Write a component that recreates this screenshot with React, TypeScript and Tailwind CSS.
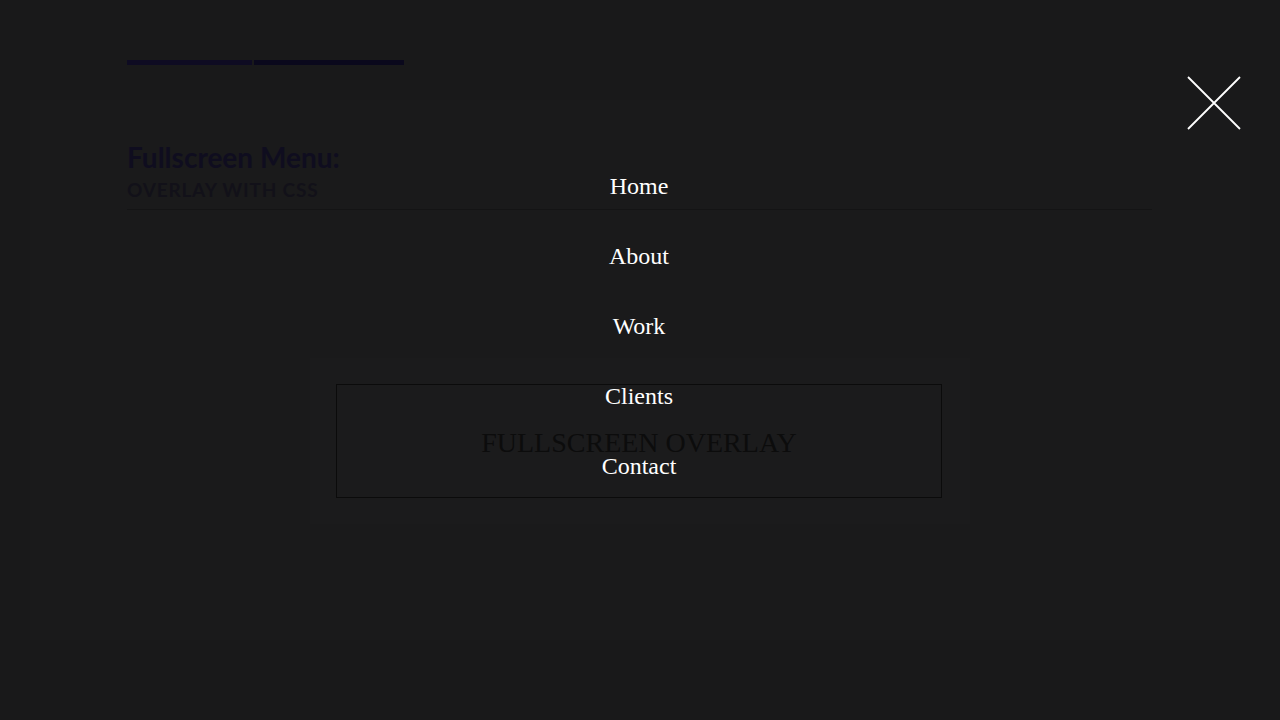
const menuItems = ["Home", "About", "Work", "Clients", "Contact"];

function CloseIcon() {
  return (
    <svg width="56" height="56" viewBox="0 0 56 56" fill="none">
      <path d="M2 2 L54 54 M54 2 L2 54" stroke="#ffffff" strokeWidth="1.8" />
    </svg>
  );
}

export default function App() {
  return (
    <div className="relative h-[720px] w-full overflow-hidden bg-[#19191a] font-['Lato',sans-serif]">
      {/* page underneath the overlay */}
      <div className="px-[127px] pt-[60px]">
        <div className="flex gap-[2px]">
          <div className="h-[5px] w-[125px] bg-[#0e0b22]" />
          <div className="h-[5px] w-[150px] bg-[#0a081c]" />
        </div>
      </div>
      <div className="mx-[30px] mt-[35px] h-[540px] bg-[#1a1a1b] px-[97px] pt-[41px]">
        <div className="w-[1025px] border-b border-[#141415] pb-[7px]">
          <h1 className="text-[28px] font-bold leading-[33px] text-[#0f0d1f]">Fullscreen Menu:</h1>
          <h2 className="mt-[4px] text-[19px] font-bold uppercase leading-[24px] tracking-[0.8px] text-[#121119]">
            Overlay with CSS
          </h2>
        </div>
        <div className="flex justify-center pt-[148px]">
          <div className="w-[660px] bg-[#1b1b1c] p-[26px] pr-[28px]">
            <div className="flex h-[114px] items-center justify-center border border-[#0b0b0b] pt-[4px]">
              <span className="font-['Liberation_Serif',serif] text-[28px] text-[#0c0c0c]">FULLSCREEN OVERLAY</span>
            </div>
          </div>
        </div>
      </div>

      {/* overlay menu */}
      <div className="absolute inset-0">
        <button className="absolute left-[1186px] top-[75px]">
          <CloseIcon />
        </button>
        <nav className="pt-[151px]">
          <ul className="flex flex-col items-center pr-[2px]">
            {menuItems.map((item) => (
              <li key={item} className="flex h-[70px] items-center">
                <a href="#" className="font-['Liberation_Serif',serif] text-[24px] leading-none text-white">
                  {item}
                </a>
              </li>
            ))}
          </ul>
        </nav>
      </div>
    </div>
  );
}
